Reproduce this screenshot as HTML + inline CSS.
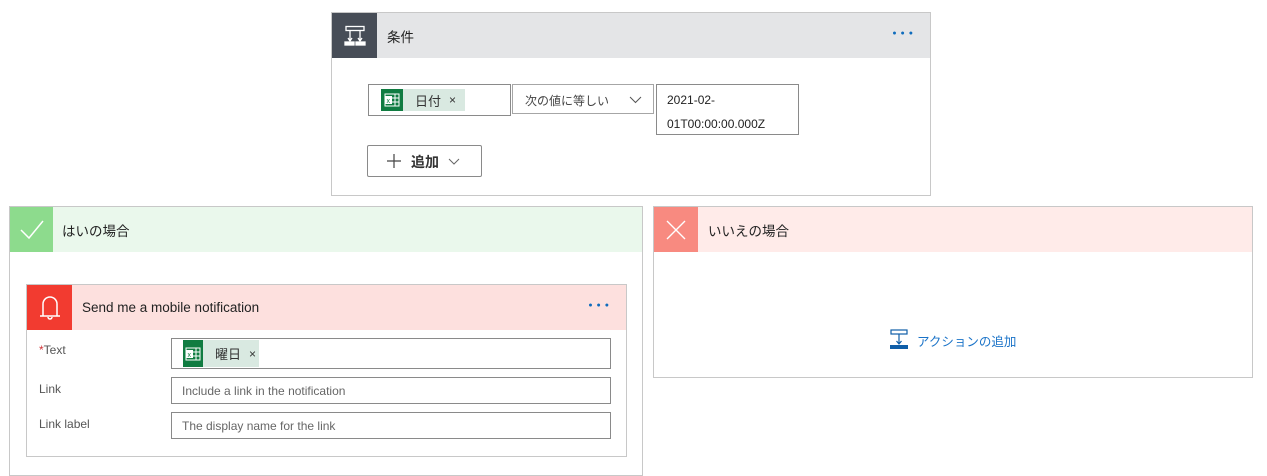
<!DOCTYPE html>
<html><head><meta charset="utf-8"><style>
*{box-sizing:border-box;margin:0;padding:0}
body{width:1267px;height:464px;background:#fff;font-family:"Segoe UI","Liberation Sans","Noto Sans CJK JP",sans-serif;font-size:13px;color:#333;position:relative;overflow:hidden}
.abs{position:absolute}
.card{position:absolute;border:1px solid #c8c8c8;background:#fff}
.hdr{position:absolute;left:0;top:0;right:0;height:45px;display:flex;align-items:center}
.ic{width:45px;height:45px;display:flex;align-items:center;justify-content:center;flex:none}
.ttl{margin-left:10px;font-size:13.5px;color:#222}
.dots{position:absolute;right:13px;top:17px;color:#0f6cbd;font-size:7px;letter-spacing:4px}
.box{position:absolute;border:1px solid #8a8a8a;background:#fff}
.tok{position:absolute;display:flex;align-items:center;background:#d9e9e1;height:22px;font-size:13px;white-space:nowrap}
.xl{width:22px;height:22px;background:#107c41;display:flex;align-items:center;justify-content:center}
.lbl{position:absolute;font-size:12px;color:#555}
.ph{position:absolute;left:10px;top:6px;font-size:12px;color:#666}
</style></head><body>
<svg width="0" height="0" style="position:absolute"><defs>
<g id="xls"><rect x="1" y="2" width="14" height="12" fill="none" stroke="#fff" stroke-width="1"/><rect x="1" y="4" width="7" height="8" fill="#fff"/><text x="2.5" y="11" font-size="7" fill="#107c41" font-family="Liberation Sans">x</text><line x1="11" y1="2" x2="11" y2="14" stroke="#fff"/><line x1="8" y1="6" x2="15" y2="6" stroke="#fff"/><line x1="8" y1="10" x2="15" y2="10" stroke="#fff"/></g>
</defs></svg>

<!-- condition -->
<div class="card" style="left:331px;top:12px;width:600px;height:184px">
 <div class="hdr" style="background:#e4e5e7">
  <div class="ic" style="background:#474d57"><svg width="24" height="24" viewBox="0 0 24 24" fill="none" stroke="#fff" stroke-width="1.3"><rect x="3" y="2.5" width="18" height="4"/><line x1="7" y1="6.5" x2="7" y2="17"/><line x1="17" y1="6.5" x2="17" y2="17"/><path d="M5 14l2 3 2-3M15 14l2 3 2-3"/><rect x="2" y="18" width="9" height="3" fill="#fff"/><rect x="13" y="18" width="9" height="3" fill="#fff"/></svg></div>
  <span class="ttl">条件</span><span class="dots">●●●</span>
 </div>
 <div class="box" style="left:36px;top:71px;width:143px;height:32px"><div class="tok" style="left:12px;top:4px;width:84px"><div class="xl"><svg width="16" height="16"><use href="#xls"/></svg></div><span style="margin-left:12px">日付</span><span style="margin-left:8px;font-size:12px">×</span></div></div>
 <div class="box" style="left:180px;top:71px;width:142px;height:30px;border-color:#a6a6a6"><span style="position:absolute;left:12px;top:7px;font-size:12px;color:#444">次の値に等しい</span><svg class="abs" style="left:116px;top:11px" width="13" height="8"><path d="M1 1l5.5 5.5L12 1" fill="none" stroke="#555"/></svg></div>
 <div class="box" style="left:324px;top:71px;width:143px;height:51px"><div style="position:absolute;left:10px;top:3px;font-size:12px;line-height:24px;color:#222">2021-02-<br>01T00:00:00.000Z</div></div>
 <div class="box" style="left:35px;top:132px;width:115px;height:32px;border-radius:2px"><svg class="abs" style="left:18px;top:7px" width="16" height="16"><path d="M8 1v14M1 8h14" stroke="#444" stroke-width="1.2"/></svg><span style="position:absolute;left:43px;top:6px;font-size:14px;font-weight:bold;color:#333">追加</span><svg class="abs" style="left:80px;top:12px" width="12" height="7"><path d="M1 1l5 5 5-5" fill="none" stroke="#666"/></svg></div>
</div>

<!-- yes -->
<div class="card" style="left:9px;top:206px;width:634px;height:270px">
 <div class="hdr" style="background:#eaf8ec">
  <div class="ic" style="background:#8ddb8d;width:43px"><svg width="26" height="26"><path d="M2 13l8 8L24 4" fill="none" stroke="#fff" stroke-width="1.5"/></svg></div>
  <span class="ttl" style="margin-left:9px">はいの場合</span>
 </div>
 <div class="card" style="left:16px;top:77px;width:601px;height:173px">
  <div class="hdr" style="background:#fde0de">
   <div class="ic" style="background:#f23b30"><svg width="22" height="28" viewBox="0 0 22 28" fill="none" stroke="#fff" stroke-width="1.5"><path d="M4 22V10a7 7 0 0 1 14 0v12M1 22h20"/><path d="M9 23a2 2 0 0 0 4 0"/></svg></div>
   <span class="ttl">Send me a mobile notification</span><span class="dots">●●●</span>
  </div>
  <span class="lbl" style="left:12px;top:58px"><span style="color:#d13438">*</span>Text</span>
  <span class="lbl" style="left:12px;top:97px">Link</span>
  <span class="lbl" style="left:12px;top:132px">Link label</span>
  <div class="box" style="left:144px;top:53px;width:440px;height:31px"><div class="tok" style="left:11px;top:1px;height:27px;width:62px;width:76px"><div class="xl" style="height:27px;width:20px"><svg width="16" height="16"><use href="#xls"/></svg></div><span style="margin-left:12px">曜日</span><span style="margin-left:8px;font-size:12px">×</span></div></div>
  <div class="box" style="left:144px;top:92px;width:440px;height:27px"><span class="ph">Include a link in the notification</span></div>
  <div class="box" style="left:144px;top:127px;width:440px;height:27px"><span class="ph">The display name for the link</span></div>
 </div>
</div>

<!-- no -->
<div class="card" style="left:653px;top:206px;width:600px;height:172px">
 <div class="hdr" style="background:#ffebe9">
  <div class="ic" style="background:#f88a80;width:44px"><svg width="22" height="22"><path d="M2 2l18 18M20 2L2 20" stroke="#fff" stroke-width="1.4"/></svg></div>
  <span class="ttl" style="margin-left:10px">いいえの場合</span>
 </div>
 <svg class="abs" style="left:236px;top:122px" width="19" height="20"><rect x="1" y="1" width="16" height="4" fill="none" stroke="#0f5ea8" stroke-width="1.2"/><path d="M9 5v10M6.5 12l2.5 3 2.5-3" fill="none" stroke="#0f5ea8" stroke-width="1.2"/><rect x="0" y="16" width="18" height="4" fill="#0f5ea8"/></svg>
 <span style="position:absolute;left:263px;top:124px;font-size:12.5px;color:#1a73c8">アクションの追加</span>
</div>
</body></html>
